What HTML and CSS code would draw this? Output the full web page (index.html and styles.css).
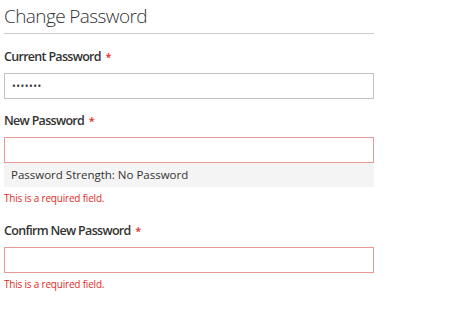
FILE: index.html
```html
<!DOCTYPE html>
<html>
<head>
<meta charset="utf-8">
<link rel="stylesheet" href="styles.css">
</head>
<body>
<fieldset class="form">
  <div class="legend">Change Password</div>
  <div class="field">
    <label class="label">Current Password <span class="req">*</span></label>
    <div class="input filled">•••••••</div>
  </div>
  <div class="field">
    <label class="label">New Password <span class="req">*</span></label>
    <div class="input error"></div>
    <div class="strength">Password Strength: No Password</div>
    <div class="msg">This is a required field.</div>
  </div>
  <div class="field">
    <label class="label">Confirm New Password <span class="req">*</span></label>
    <div class="input error"></div>
    <div class="msg">This is a required field.</div>
  </div>
</fieldset>
</body>
</html>
```
FILE: styles.css
```css
html, body {
  margin: 0;
  padding: 0;
  background: #fff;
}
body {
  font-family: "Open Sans", "Liberation Sans", sans-serif;
  color: #333;
}
.form {
  margin: 0;
  border: 0;
  padding: 0 100px 0 4px;
  display: flex;
  flex-direction: column;
}
.legend {
  font-size: 19px;
  font-weight: 300;
  letter-spacing: -0.6px;
  line-height: 22px;
  padding-top: 5px;
  padding-bottom: 6px;
  border-bottom: 1px solid #cccccc;
  margin-bottom: 15px;
}
.field {
  display: flex;
  flex-direction: column;
  margin-bottom: 14px;
}
.label {
  font-size: 12.5px;
  font-weight: 600;
  letter-spacing: -0.7px;
  line-height: 16px;
  margin-bottom: 8px;
}
.req {
  color: #e02b27;
  font-size: 11px;
  letter-spacing: 0;
  margin-left: 2px;
}
.input {
  height: 24px;
  border: 1px solid #c2c2c2;
  padding: 0 7px;
  font-size: 10px;
  line-height: 24px;
  letter-spacing: 0.5px;
}
.input.error {
  border-color: #ec9896;
}
.strength {
  background: #f4f4f4;
  font-size: 11.5px;
  line-height: 24px;
  padding: 0 7px;
}
.msg {
  color: #e02b27;
  font-size: 10px;
  letter-spacing: -0.2px;
  line-height: 14px;
  margin-top: 4px;
  margin-bottom: 4px;
}
```
